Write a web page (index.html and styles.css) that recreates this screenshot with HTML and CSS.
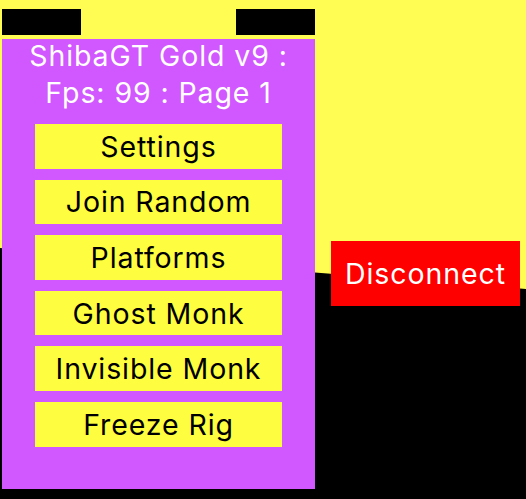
FILE: index.html
```html
<!DOCTYPE html>
<html>
<head>
<meta charset="utf-8">
<link rel="stylesheet" href="styles.css">
</head>
<body>
<div class="ground"></div>
<div class="screen">
  <div class="bars">
    <div class="bar"></div>
    <div class="bar"></div>
  </div>
  <div class="main">
    <div class="panel">
      <div class="title">ShibaGT Gold v9 :<br>Fps: 99 : Page 1</div>
      <div class="buttons">
        <div class="btn">Settings</div>
        <div class="btn">Join Random</div>
        <div class="btn">Platforms</div>
        <div class="btn">Ghost Monk</div>
        <div class="btn">Invisible Monk</div>
        <div class="btn">Freeze Rig</div>
      </div>
    </div>
    <div class="disconnect">Disconnect</div>
  </div>
</div>
</body>
</html>
```
FILE: styles.css
```css
html, body {
  margin: 0;
  padding: 0;
}
body {
  width: 526px;
  height: 499px;
  overflow: hidden;
  background: #fffd54;
  font-family: Inter, "Noto Sans", sans-serif;
  position: relative;
}
.ground {
  position: absolute;
  inset: 0;
  background: #000;
  clip-path: polygon(0 248px, 526px 289px, 526px 499px, 0 499px);
}
.screen {
  position: relative;
  padding: 9px 0 0 2px;
}
.bars {
  display: flex;
  justify-content: space-between;
  width: 313px;
}
.bar {
  width: 79px;
  height: 26px;
  background: #000;
}
.main {
  display: flex;
  align-items: flex-start;
  margin-top: 4px;
}
.panel {
  width: 313px;
  height: 450px;
  background: #d157ff;
  display: flex;
  flex-direction: column;
  align-items: center;
}
.title {
  color: #fff;
  font-size: 28.5px;
  line-height: 37px;
  letter-spacing: 0.9px;
  text-align: center;
  margin-top: -2px;
}
.buttons {
  margin-top: 13px;
  display: flex;
  flex-direction: column;
  gap: 11px;
}
.btn {
  width: 247px;
  height: 44.6px;
  background: #fffd3f;
  color: #000;
  font-size: 28.5px;
  letter-spacing: 0.9px;
  display: flex;
  align-items: center;
  justify-content: center;
}
.disconnect {
  margin-top: 202px;
  margin-left: 16px;
  width: 189px;
  height: 65px;
  background: #ff0000;
  color: #fff;
  font-size: 28.5px;
  letter-spacing: 0.9px;
  display: flex;
  align-items: center;
  justify-content: center;
}
```
